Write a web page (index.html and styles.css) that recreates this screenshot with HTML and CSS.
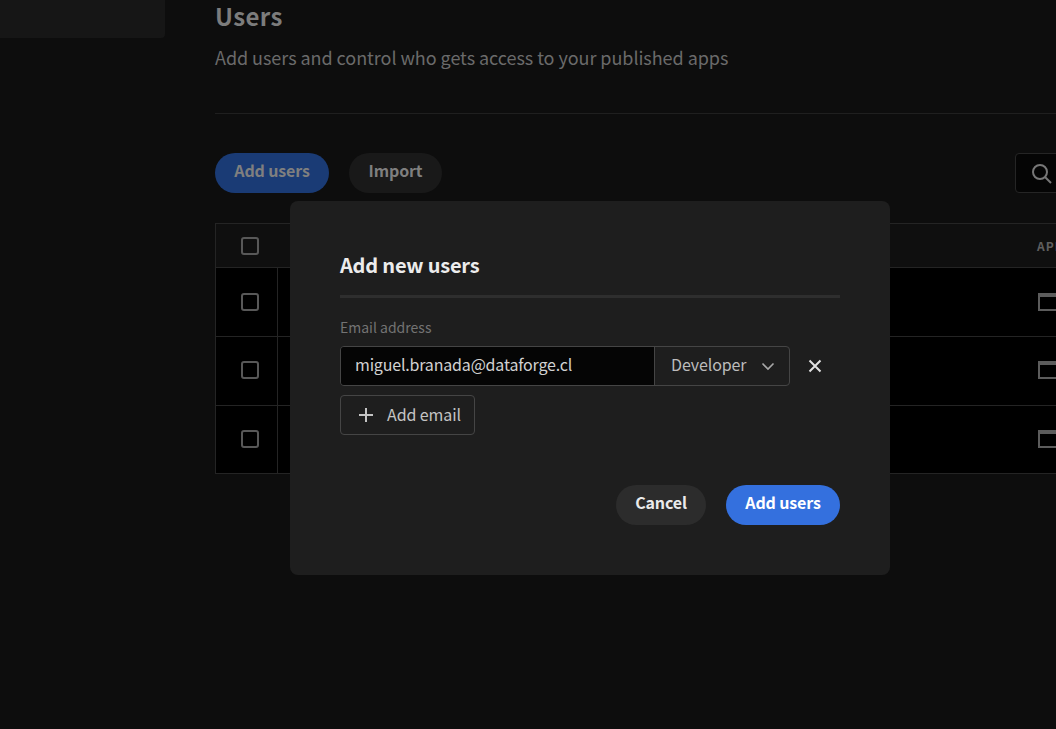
FILE: index.html
```html
<!DOCTYPE html>
<html lang="en">
<head>
<meta charset="utf-8">
<title>Users</title>
<link rel="stylesheet" href="styles.css">
</head>
<body>
<div class="page">
  <aside class="sidebar"><div class="side-item"></div></aside>
  <main class="main">
    <h1 class="title">Users</h1>
    <p class="subtitle">Add users and control who gets access to your published apps</p>
    <hr class="rule">
    <div class="toolbar">
      <button class="pill pill-primary-dim">Add users</button>
      <button class="pill pill-dim">Import</button>
      <div class="search">
        <svg class="search-icon" width="24" height="24" viewBox="0 0 24 24" fill="none" stroke="#777" stroke-width="2"><circle cx="10" cy="10" r="7"/><path d="M15 15l6 6"/></svg>
      </div>
    </div>
    <div class="table">
      <div class="row row-head">
        <div class="cell-check"><span class="check"></span></div>
        <div class="cell-main"></div>
        <div class="cell-apps head-label">APPS</div>
      </div>
      <div class="row row-body">
        <div class="cell-check"><span class="check"></span></div>
        <div class="cell-main"></div>
        <div class="cell-apps"><span class="app-icon"></span></div>
      </div>
      <div class="row row-body row-raised">
        <div class="cell-check"><span class="check"></span></div>
        <div class="cell-main"></div>
        <div class="cell-apps"><span class="app-icon"></span></div>
      </div>
      <div class="row row-body row-raised row-last">
        <div class="cell-check"><span class="check"></span></div>
        <div class="cell-main"></div>
        <div class="cell-apps"><span class="app-icon"></span></div>
      </div>
    </div>
  </main>
</div>
<section class="modal">
  <h2 class="modal-title">Add new users</h2>
  <label class="field-label">Email address</label>
  <div class="email-row">
    <div class="email-group">
      <div class="email-input">miguel.branada@dataforge.cl</div>
      <div class="role-select">
        <span>Developer</span>
        <svg width="14" height="14" viewBox="0 0 14 14" fill="none" stroke="#a8a8a8" stroke-width="1.600"><path d="M1.500 4.500L7 10l5.500-5.500"/></svg>
      </div>
    </div>
    <svg class="remove" width="14" height="14" viewBox="0 0 14 14" fill="none" stroke="#e0e0e0" stroke-width="2"><path d="M1.500 1.500l11 11M12.500 1.500l-11 11"/></svg>
  </div>
  <button class="add-email">
    <svg width="16" height="16" viewBox="0 0 16 16" fill="none" stroke="#c4c4c4" stroke-width="2"><path d="M8 1v14M1 8h14"/></svg>
    <span>Add email</span>
  </button>
  <div class="modal-actions">
    <button class="pill pill-cancel">Cancel</button>
    <button class="pill pill-primary">Add users</button>
  </div>
</section>
</body>
</html>
```
FILE: styles.css
```css
* { box-sizing: border-box; }
html, body { margin: 0; height: 100%; }
body {
  background: #0d0d0d;
  font-family: "Noto Sans CJK SC", "Noto Sans", sans-serif;
  overflow: hidden;
  position: relative;
}
button { font-family: inherit; border: 0; white-space: nowrap; }
.page { display: flex; height: 729px; }
.sidebar { width: 215px; flex: none; }
.side-item { width: 165px; height: 38px; background: #161616; border-bottom-right-radius: 4px; }
.main { flex: none; width: 1100px; }
.title { margin: 0; font-size: 24px; line-height: 32px; font-weight: 700; letter-spacing: 0.4px; color: #7c7c7c; }
.subtitle { margin: 14px 0 0; font-size: 18px; line-height: 22px; font-weight: 400; letter-spacing: -0.05px; color: #6a6a6a; }
.rule { margin: 45px 0 0; border: 0; border-top: 1px solid #1f1f1f; }
.toolbar { display: flex; gap: 20px; margin-top: 39px; height: 40px; }
.pill { height: 40px; border-radius: 20px; font-size: 16px; font-weight: 700; padding: 0 0 7px; letter-spacing: -0.15px; }
.pill-primary-dim { background: #1a3b75; color: #7f7f7f; width: 114px; }
.pill-dim { background: #191919; color: #7f7f7f; width: 93px; }
.search { margin-left: 553px; width: 200px; height: 40px; background: #050505; border: 1px solid #252525; border-radius: 4px; padding: 8px 0 0 14px; }
.search-icon { display: block; }
.table { margin-top: 30px; width: 1000px; border: 1px solid #242424; border-right: 0; background: #000; }
.row { display: flex; border-bottom: 1px solid #242424; }
.row-head { height: 44px; background: #0f0f0f; }
.row-body { height: 69px; }
.row-raised .check, .row-raised .app-icon { margin-bottom: 2px; }
.row-last { height: 67px; border-bottom: 0; }
.cell-check { width: 62px; flex: none; display: flex; align-items: center; padding-left: 25px; }
.row-body .cell-check { border-right: 1px solid #242424; }
.check { display: block; width: 18px; height: 18px; border: 2px solid #585858; border-radius: 3px; }
.cell-main { width: 760px; flex: none; }
.cell-apps { display: flex; align-items: center; }
.head-label { font-size: 12px; font-weight: 700; letter-spacing: 1px; color: #5f5f5f; margin-left: -1px; }
.app-icon { display: block; width: 30px; height: 18px; border: 2px solid #5c5c5c; border-top-width: 4px; }
.modal {
  position: absolute;
  left: 290px;
  top: 201px;
  width: 600px;
  height: 374px;
  background: #1e1e1e;
  border-radius: 8px;
  padding: 50px;
}
.modal-title { margin: 0; padding-bottom: 16px; font-size: 20px; line-height: 28px; font-weight: 700; letter-spacing: -0.2px; color: #ececec; border-bottom: 3px solid #2e2e2e; }
.field-label { display: block; margin-top: 19px; font-size: 14px; line-height: 20px; color: #737373; }
.email-row { display: flex; align-items: center; margin-top: 9px; }
.email-group { display: flex; width: 450px; height: 40px; border: 1px solid #454545; border-radius: 4px; overflow: hidden; }
.email-input { width: 314px; flex: none; background: #050505; color: #d2d2d2; font-size: 16px; line-height: 34px; letter-spacing: -0.18px; padding-left: 14px; border-right: 1px solid #454545; }
.role-select { flex: 1; display: flex; align-items: center; justify-content: space-between; padding: 0 14px 4px 16px; font-size: 16px; letter-spacing: -0.1px; color: #bcbcbc; }
.role-select svg { margin-top: 4px; }
.remove { margin-left: 18px; }
.add-email { display: flex; align-items: center; gap: 13px; margin-top: 9px; width: 135px; height: 40px; padding: 0 0 0 17px; background: transparent; border: 1px solid #454545; border-radius: 4px; font-size: 16px; letter-spacing: -0.1px; color: #c4c4c4; }
.add-email span { margin-top: -2px; }
.modal-actions { display: flex; justify-content: flex-end; gap: 20px; margin-top: 50px; }
.pill-cancel { background: #2c2c2c; color: #eaeaea; width: 90px; }
.pill-primary { background: #3470de; color: #fff; width: 114px; }
```
